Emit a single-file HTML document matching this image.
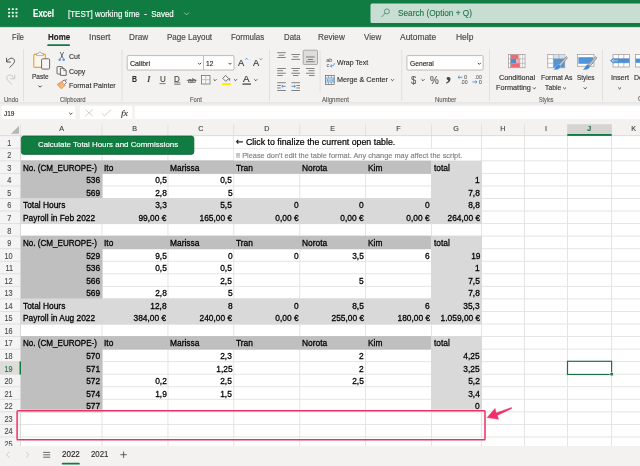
<!DOCTYPE html><html><head><meta charset="utf-8"><title>Excel</title><style>
html,body{margin:0;padding:0;overflow:hidden}
body{width:640px;height:466px;overflow:hidden;position:relative;background:#f3f2f1;font-family:"Liberation Sans", sans-serif}
.t{position:absolute;white-space:pre;line-height:14px;height:14px;margin:0;padding:0;-webkit-text-stroke:0.14px currentColor}
svg{position:absolute;left:0;top:0;will-change:transform}
.L{position:absolute;left:0;top:0;width:640px;height:466px;will-change:transform}
</style></head><body>
<svg width="640" height="466" viewBox="0 0 640 466">
<rect x="0" y="0" width="640" height="27" fill="#107c41"/>
<rect x="0" y="26.6" width="640" height="0.8" fill="#5a9d78" opacity="0.6"/>
<rect x="8.15" y="8.15" width="1.9" height="1.9" rx="0.4" fill="#fff"/>
<rect x="8.15" y="11.75" width="1.9" height="1.9" rx="0.4" fill="#fff"/>
<rect x="8.15" y="15.35" width="1.9" height="1.9" rx="0.4" fill="#fff"/>
<rect x="11.85" y="8.15" width="1.9" height="1.9" rx="0.4" fill="#fff"/>
<rect x="11.85" y="11.75" width="1.9" height="1.9" rx="0.4" fill="#fff"/>
<rect x="11.85" y="15.35" width="1.9" height="1.9" rx="0.4" fill="#fff"/>
<rect x="15.55" y="8.15" width="1.9" height="1.9" rx="0.4" fill="#fff"/>
<rect x="15.55" y="11.75" width="1.9" height="1.9" rx="0.4" fill="#fff"/>
<rect x="15.55" y="15.35" width="1.9" height="1.9" rx="0.4" fill="#fff"/>
<path d="M184.3,12.6 L186.6,14.9 L188.9,12.6" fill="none" stroke="#b7d8c6" stroke-width="0.8"/>
<rect x="370.5" y="3.5" width="280" height="19.6" rx="1.6" fill="#c9ded2"/>
<circle cx="386.9" cy="11.4" r="2.5" fill="none" stroke="#3a8560" stroke-width="0.8"/>
<path d="M385.1,13.3 L381.7,16.8" stroke="#3a8560" stroke-width="0.8" stroke-linecap="round"/>
<rect x="47.2" y="44.2" width="22.8" height="1.9" rx="0.9" fill="#107c41"/>
<rect x="0" y="102.4" width="640" height="0.9" fill="#dfdedc"/>
<rect x="0" y="103.3" width="640" height="0.9" fill="#e8e7e5"/>
<rect x="0" y="104.2" width="640" height="0.9" fill="#efeeec"/>
<rect x="1.6" y="105.9" width="73.8" height="13.1" rx="1.2" fill="#fff"/>
<rect x="79.8" y="105.9" width="52.4" height="13.1" rx="1.2" fill="#fff"/>
<rect x="135" y="105.9" width="520" height="13.1" rx="1.2" fill="#fff"/>
<path d="M69.2,112.8 L70.8,114.4 L72.4,112.8" fill="none" stroke="#3b3a39" stroke-width="0.95"/>
<path d="M85.5,109.7 L92.6,116 M92.6,109.7 L85.5,116" stroke="#c2c0be" stroke-width="0.75" fill="none"/>
<path d="M101.8,113.2 L104.6,115.9 L110.8,109.7" stroke="#c2c0be" stroke-width="0.75" fill="none"/>
<rect x="23.1" y="49.5" width="0.8" height="51.5" fill="#dddbd9"/>
<rect x="121.6" y="49.5" width="0.8" height="51.5" fill="#dddbd9"/>
<rect x="269.1" y="49.5" width="0.8" height="51.5" fill="#dddbd9"/>
<rect x="401.40000000000003" y="49.5" width="0.8" height="51.5" fill="#dddbd9"/>
<rect x="489.1" y="49.5" width="0.8" height="51.5" fill="#dddbd9"/>
<rect x="602.1" y="49.5" width="0.8" height="51.5" fill="#dddbd9"/>
<rect x="319.7" y="51" width="0.8" height="41.5" fill="#dddbd9"/>
<rect x="127.2" y="55.6" width="106.8" height="14.4" rx="1" fill="#fff" stroke="#a9a7a5" stroke-width="0.75"/>
<rect x="203" y="55.6" width="0.7" height="14.4" fill="#a9a7a5"/>
<rect x="406.9" y="55.6" width="76.2" height="14.4" rx="1" fill="#fff" stroke="#a9a7a5" stroke-width="0.75"/>
<rect x="303.2" y="50.2" width="14.3" height="14.3" rx="1" fill="#dedcda" stroke="#8f8d8b" stroke-width="0.7"/>
<rect x="0" y="135.8" width="640" height="310.2" fill="#fff"/>
<rect x="20.6" y="147.85" width="640" height="0.9" fill="#e2e2e2"/>
<rect x="20.6" y="160.40" width="640" height="0.9" fill="#e2e2e2"/>
<rect x="20.6" y="172.95" width="640" height="0.9" fill="#e2e2e2"/>
<rect x="20.6" y="185.50" width="640" height="0.9" fill="#e2e2e2"/>
<rect x="20.6" y="198.05" width="640" height="0.9" fill="#e2e2e2"/>
<rect x="20.6" y="210.60" width="640" height="0.9" fill="#e2e2e2"/>
<rect x="20.6" y="223.15" width="640" height="0.9" fill="#e2e2e2"/>
<rect x="20.6" y="235.70" width="640" height="0.9" fill="#e2e2e2"/>
<rect x="20.6" y="248.25" width="640" height="0.9" fill="#e2e2e2"/>
<rect x="20.6" y="260.80" width="640" height="0.9" fill="#e2e2e2"/>
<rect x="20.6" y="273.35" width="640" height="0.9" fill="#e2e2e2"/>
<rect x="20.6" y="285.90" width="640" height="0.9" fill="#e2e2e2"/>
<rect x="20.6" y="298.45" width="640" height="0.9" fill="#e2e2e2"/>
<rect x="20.6" y="311.00" width="640" height="0.9" fill="#e2e2e2"/>
<rect x="20.6" y="323.55" width="640" height="0.9" fill="#e2e2e2"/>
<rect x="20.6" y="336.10" width="640" height="0.9" fill="#e2e2e2"/>
<rect x="20.6" y="348.65" width="640" height="0.9" fill="#e2e2e2"/>
<rect x="20.6" y="361.20" width="640" height="0.9" fill="#e2e2e2"/>
<rect x="20.6" y="373.75" width="640" height="0.9" fill="#e2e2e2"/>
<rect x="20.6" y="386.30" width="640" height="0.9" fill="#e2e2e2"/>
<rect x="20.6" y="398.85" width="640" height="0.9" fill="#e2e2e2"/>
<rect x="20.6" y="411.40" width="640" height="0.9" fill="#e2e2e2"/>
<rect x="20.6" y="423.95" width="640" height="0.9" fill="#e2e2e2"/>
<rect x="20.6" y="436.50" width="640" height="0.9" fill="#e2e2e2"/>
<rect x="20.6" y="449.05" width="640" height="0.9" fill="#e2e2e2"/>
<rect x="101.50" y="135.8" width="0.9" height="320" fill="#e2e2e2"/>
<rect x="167.50" y="135.8" width="0.9" height="320" fill="#e2e2e2"/>
<rect x="233.30" y="135.8" width="0.9" height="320" fill="#e2e2e2"/>
<rect x="299.30" y="135.8" width="0.9" height="320" fill="#e2e2e2"/>
<rect x="365.10" y="135.8" width="0.9" height="320" fill="#e2e2e2"/>
<rect x="431.00" y="135.8" width="0.9" height="320" fill="#e2e2e2"/>
<rect x="481.00" y="135.8" width="0.9" height="320" fill="#e2e2e2"/>
<rect x="524.10" y="135.8" width="0.9" height="320" fill="#e2e2e2"/>
<rect x="567.00" y="135.8" width="0.9" height="320" fill="#e2e2e2"/>
<rect x="611.10" y="135.8" width="0.9" height="320" fill="#e2e2e2"/>
<rect x="654.50" y="135.8" width="0.9" height="320" fill="#e2e2e2"/>
<rect x="20.60" y="160.40" width="411.35" height="13.50" fill="#bfbfbf"/>
<rect x="431.00" y="160.40" width="50.95" height="38.60" fill="#d9d9d9"/>
<rect x="20.60" y="172.95" width="81.85" height="26.05" fill="#bfbfbf"/>
<rect x="20.60" y="198.05" width="461.35" height="26.05" fill="#d9d9d9"/>
<rect x="20.60" y="235.70" width="411.35" height="13.50" fill="#bfbfbf"/>
<rect x="431.00" y="235.70" width="50.95" height="63.70" fill="#d9d9d9"/>
<rect x="20.60" y="248.25" width="81.85" height="51.15" fill="#bfbfbf"/>
<rect x="20.60" y="298.45" width="461.35" height="26.05" fill="#d9d9d9"/>
<rect x="20.60" y="336.10" width="411.35" height="13.50" fill="#bfbfbf"/>
<rect x="431.00" y="336.10" width="50.95" height="76.25" fill="#d9d9d9"/>
<rect x="20.60" y="348.65" width="81.85" height="63.70" fill="#bfbfbf"/>
<rect x="234.4" y="136.30" width="196.50" height="11.55" fill="#fff"/>
<rect x="234.4" y="148.85" width="246.50" height="11.55" fill="#fff"/>
<rect x="0" y="135.8" width="20.6" height="310.2" fill="#f4f4f4"/>
<rect x="0" y="147.85" width="20.6" height="0.9" fill="#dedede"/>
<rect x="0" y="160.40" width="20.6" height="0.9" fill="#dedede"/>
<rect x="0" y="172.95" width="20.6" height="0.9" fill="#dedede"/>
<rect x="0" y="185.50" width="20.6" height="0.9" fill="#dedede"/>
<rect x="0" y="198.05" width="20.6" height="0.9" fill="#dedede"/>
<rect x="0" y="210.60" width="20.6" height="0.9" fill="#dedede"/>
<rect x="0" y="223.15" width="20.6" height="0.9" fill="#dedede"/>
<rect x="0" y="235.70" width="20.6" height="0.9" fill="#dedede"/>
<rect x="0" y="248.25" width="20.6" height="0.9" fill="#dedede"/>
<rect x="0" y="260.80" width="20.6" height="0.9" fill="#dedede"/>
<rect x="0" y="273.35" width="20.6" height="0.9" fill="#dedede"/>
<rect x="0" y="285.90" width="20.6" height="0.9" fill="#dedede"/>
<rect x="0" y="298.45" width="20.6" height="0.9" fill="#dedede"/>
<rect x="0" y="311.00" width="20.6" height="0.9" fill="#dedede"/>
<rect x="0" y="323.55" width="20.6" height="0.9" fill="#dedede"/>
<rect x="0" y="336.10" width="20.6" height="0.9" fill="#dedede"/>
<rect x="0" y="348.65" width="20.6" height="0.9" fill="#dedede"/>
<rect x="0" y="361.20" width="20.6" height="0.9" fill="#dedede"/>
<rect x="0" y="373.75" width="20.6" height="0.9" fill="#dedede"/>
<rect x="0" y="386.30" width="20.6" height="0.9" fill="#dedede"/>
<rect x="0" y="398.85" width="20.6" height="0.9" fill="#dedede"/>
<rect x="0" y="411.40" width="20.6" height="0.9" fill="#dedede"/>
<rect x="0" y="423.95" width="20.6" height="0.9" fill="#dedede"/>
<rect x="0" y="436.50" width="20.6" height="0.9" fill="#dedede"/>
<rect x="0" y="449.05" width="20.6" height="0.9" fill="#dedede"/>
<rect x="20.1" y="135.8" width="0.8" height="320" fill="#d4d4d4"/>
<rect x="0" y="361.70" width="20.6" height="12.55" fill="#dfdddb"/>
<rect x="19.50" y="361.40" width="1.5" height="13.15" fill="#107c41"/>
<rect x="0" y="119" width="640" height="16.80000000000001" fill="#f3f2f1"/>
<rect x="20.10" y="124.4" width="0.9" height="11.400000000000006" fill="#e0e0e0"/>
<rect x="101.50" y="124.4" width="0.9" height="11.400000000000006" fill="#e0e0e0"/>
<rect x="167.50" y="124.4" width="0.9" height="11.400000000000006" fill="#e0e0e0"/>
<rect x="233.30" y="124.4" width="0.9" height="11.400000000000006" fill="#e0e0e0"/>
<rect x="299.30" y="124.4" width="0.9" height="11.400000000000006" fill="#e0e0e0"/>
<rect x="365.10" y="124.4" width="0.9" height="11.400000000000006" fill="#e0e0e0"/>
<rect x="431.00" y="124.4" width="0.9" height="11.400000000000006" fill="#e0e0e0"/>
<rect x="481.00" y="124.4" width="0.9" height="11.400000000000006" fill="#e0e0e0"/>
<rect x="524.10" y="124.4" width="0.9" height="11.400000000000006" fill="#e0e0e0"/>
<rect x="567.00" y="124.4" width="0.9" height="11.400000000000006" fill="#e0e0e0"/>
<rect x="611.10" y="124.4" width="0.9" height="11.400000000000006" fill="#e0e0e0"/>
<rect x="654.50" y="124.4" width="0.9" height="11.400000000000006" fill="#e0e0e0"/>
<rect x="0" y="135.20000000000002" width="640" height="0.9" fill="#d9d9d9"/>
<rect x="567.30" y="124.2" width="44.40" height="10" fill="#d6d4d2"/>
<rect x="567.30" y="134" width="44.40" height="1.9" fill="#107c41"/>
<path d="M19,125.8 L19,133.8 L11,133.8 Z" fill="#b5b5b5"/>
<rect x="21.3" y="136" width="172.6" height="18.4" rx="2.6" fill="#107c41" stroke="#0c5e31" stroke-width="0.7"/>
<rect x="567.50" y="361.30" width="44.10" height="13.15" fill="#fff" stroke="#1e7145" stroke-width="1.2"/>
<rect x="610.00" y="372.65" width="3.2" height="3.2" fill="#1e7145" stroke="#fff" stroke-width="0.6"/>
<path d="M6.6,57.8 L6.6,62 L10.8,62 M6.9,61.7 C8.6,58.6 11.6,57.2 13.6,58.9 C15.6,60.7 14.6,63.2 9.5,67.5" fill="none" stroke="#484644" stroke-width="0.9"/>
<path d="M14.7,74.6 L14.7,78.8 L10.5,78.8 M14.4,78.5 C12.7,75.4 9.7,74 7.7,75.7 C5.7,77.5 6.7,80 11.8,84.3" fill="none" stroke="#c4c2c0" stroke-width="0.9"/>
<rect x="33.8" y="54.4" width="11.6" height="13" rx="0.8" fill="#faf6ee" stroke="#eba13a" stroke-width="1.1"/>
<path d="M36.6,55.6 L36.6,53.4 L38.6,53.4 L40,51.5 L41.4,53.4 L43.4,53.4 L43.4,55.6 Z" fill="#f6f6f6" stroke="#9a9896" stroke-width="0.7"/>
<rect x="41.6" y="58.8" width="8" height="10.3" rx="1" fill="#f6f5f4" stroke="#5d5b59" stroke-width="0.9"/>
<path d="M38.50,85.60 L40.10,87.20 L41.70,85.60" fill="none" stroke="#3b3a39" stroke-width="0.95"/>
<path d="M60.2,52 L63.3,58.7 M63.6,52 L60.5,58.7" stroke="#484644" stroke-width="0.75" fill="none"/>
<circle cx="59.7" cy="59.7" r="1.25" fill="#4a9be0"/><circle cx="63.7" cy="59.7" r="1.25" fill="#4a9be0"/>
<rect x="57" y="66.6" width="5.4" height="7.4" rx="0.6" fill="#f6f5f4" stroke="#484644" stroke-width="0.8"/>
<path d="M60.4,68.2 L64,68.2 L66.2,70.4 L66.2,75.4 L60.4,75.4 Z" fill="#f6f5f4" stroke="#484644" stroke-width="0.8"/>
<path d="M63.8,68.4 L63.8,70.6 L66,70.6" fill="none" stroke="#484644" stroke-width="0.6"/>
<path d="M57.2,84.4 L62.2,81.2 L65.2,85.4 L61.2,88.8 Z" fill="#f2a964" stroke="#e27a26" stroke-width="0.6" stroke-linejoin="round"/>
<path d="M59.6,85.6 L62.6,83.6 M60.8,87.2 L63.8,85" stroke="#fbe3cc" stroke-width="0.6"/>
<path d="M62.2,81.4 L64.4,79.9 L66.4,82.6 L64.6,84.4" fill="#f6f5f4" stroke="#484644" stroke-width="0.7" stroke-linejoin="round"/>
<path d="M65.2,80.4 L66.6,79.6" stroke="#484644" stroke-width="0.9"/>
<path d="M198.10,62.85 L199.60,64.35 L201.10,62.85" fill="none" stroke="#3b3a39" stroke-width="0.95"/>
<path d="M228.50,62.85 L230.00,64.35 L231.50,62.85" fill="none" stroke="#3b3a39" stroke-width="0.95"/>
<path d="M477.80,62.85 L479.30,64.35 L480.80,62.85" fill="none" stroke="#3b3a39" stroke-width="0.95"/>
<path d="M245.2,59.6 L246.5,58.2 L247.8,59.6" fill="none" stroke="#2b88d8" stroke-width="0.8"/>
<path d="M259.6,58.4 L260.9,59.8 L262.2,58.4" fill="none" stroke="#2b88d8" stroke-width="0.8"/>
<rect x="186.6" y="79.9" width="10" height="0.65" fill="#484644"/>
<rect x="159.4" y="83.4" width="6.2" height="0.65" fill="#484644"/>
<rect x="174.2" y="82.6" width="6.2" height="0.6" fill="#484644"/><rect x="174.2" y="83.9" width="6.2" height="0.6" fill="#484644"/>
<rect x="201.4" y="75.4" width="8.6" height="8.6" fill="#f8f7f6" stroke="#605e5c" stroke-width="0.7"/>
<path d="M205.7,75.4 L205.7,84 M201.4,79.7 L210,79.7" stroke="#a19f9d" stroke-width="0.6"/>
<path d="M213.60,79.30 L215.00,80.70 L216.40,79.30" fill="none" stroke="#3b3a39" stroke-width="0.95"/>
<path d="M225.6,75.4 L228.6,78.5 L225.8,81.4 L222.8,78.4 Z" fill="#f8f7f6" stroke="#484644" stroke-width="0.75" stroke-linejoin="round"/>
<path d="M229.4,77.8 C230.5,79.2 230.7,80.6 229.5,80.8 C228.3,80.6 228.5,79.2 229.4,77.8 Z" fill="#2b88d8"/>
<rect x="222" y="83" width="8.8" height="2" fill="#ffee00"/>
<path d="M234.10,79.30 L235.50,80.70 L236.90,79.30" fill="none" stroke="#3b3a39" stroke-width="0.95"/>
<rect x="242.4" y="83.2" width="8.6" height="1.8" fill="#777573"/>
<path d="M254.40,79.30 L255.80,80.70 L257.20,79.30" fill="none" stroke="#3b3a39" stroke-width="0.95"/>
<rect x="277.20" y="52.40" width="8.60" height="0.75" fill="#605e5c"/><rect x="278.70" y="54.80" width="5.60" height="0.75" fill="#605e5c"/><rect x="277.20" y="57.20" width="8.60" height="0.75" fill="#605e5c"/>
<rect x="291.40" y="54.10" width="8.60" height="0.75" fill="#605e5c"/><rect x="292.90" y="56.50" width="5.60" height="0.75" fill="#605e5c"/><rect x="291.40" y="58.90" width="8.60" height="0.75" fill="#605e5c"/>
<rect x="306.00" y="56.60" width="8.60" height="0.75" fill="#605e5c"/><rect x="307.70" y="59.00" width="5.20" height="0.75" fill="#605e5c"/><rect x="306.00" y="61.40" width="8.60" height="0.75" fill="#605e5c"/>
<rect x="277.20" y="68.00" width="8.60" height="0.75" fill="#605e5c"/><rect x="277.20" y="70.40" width="5.80" height="0.75" fill="#605e5c"/><rect x="277.20" y="72.80" width="8.60" height="0.75" fill="#605e5c"/><rect x="277.20" y="75.20" width="5.60" height="0.75" fill="#605e5c"/>
<rect x="291.40" y="68.00" width="8.60" height="0.75" fill="#605e5c"/><rect x="293.00" y="70.40" width="5.40" height="0.75" fill="#605e5c"/><rect x="291.40" y="72.80" width="8.60" height="0.75" fill="#605e5c"/><rect x="293.00" y="75.20" width="5.40" height="0.75" fill="#605e5c"/>
<rect x="306.00" y="68.00" width="8.60" height="0.75" fill="#605e5c"/><rect x="308.40" y="70.40" width="6.20" height="0.75" fill="#605e5c"/><rect x="306.00" y="72.80" width="8.60" height="0.75" fill="#605e5c"/><rect x="309.00" y="75.20" width="5.60" height="0.75" fill="#605e5c"/>
<rect x="277.20" y="82.40" width="8.60" height="0.75" fill="#605e5c"/><rect x="277.20" y="85.00" width="3.60" height="0.75" fill="#605e5c"/><rect x="277.20" y="87.60" width="3.60" height="0.75" fill="#605e5c"/><rect x="277.20" y="90.20" width="8.60" height="0.75" fill="#605e5c"/>
<path d="M285.8,86.3 L281.8,86.3 M283.2,85 L281.8,86.3 L283.2,87.6" fill="none" stroke="#2b88d8" stroke-width="0.8"/>
<rect x="291.40" y="82.40" width="8.60" height="0.75" fill="#605e5c"/><rect x="296.40" y="85.00" width="3.60" height="0.75" fill="#605e5c"/><rect x="296.40" y="87.60" width="3.60" height="0.75" fill="#605e5c"/><rect x="291.40" y="90.20" width="8.60" height="0.75" fill="#605e5c"/>
<path d="M291.4,86.3 L295.4,86.3 M294,85 L295.4,86.3 L294,87.6" fill="none" stroke="#2b88d8" stroke-width="0.8"/>
<text x="326.2" y="62.4" font-family="Liberation Sans, sans-serif" font-size="5.6" fill="#484644">ab</text>
<text x="326.4" y="67.4" font-family="Liberation Sans, sans-serif" font-size="5.6" fill="#484644">c</text>
<path d="M334.3,63.2 C334.5,65.2 333.4,66 330.6,66 M332,64.6 L330.4,66 L332,67.4" fill="none" stroke="#2b88d8" stroke-width="0.8"/>
<rect x="325.4" y="75.6" width="8.8" height="8.8" fill="#f6f5f4" stroke="#5a5856" stroke-width="0.65"/>
<rect x="325.7" y="78" width="8.2" height="4" fill="#cfe4f7" stroke="#2b88d8" stroke-width="0.55"/>
<path d="M327,80.1 L332.8,80.1 M328,79.2 L327,80.1 L328,81 M331.8,79.2 L332.8,80.1 L331.8,81" fill="none" stroke="#2b88d8" stroke-width="0.55"/>
<path d="M328.4,75.6 L328.4,78 M331.3,75.6 L331.3,78 M328.4,82 L328.4,84.4 M331.3,82 L331.3,84.4" stroke="#5a5856" stroke-width="0.5"/>
<path d="M391.10,79.30 L392.50,80.70 L393.90,79.30" fill="none" stroke="#3b3a39" stroke-width="0.95"/>
<path d="M421.60,79.30 L423.00,80.70 L424.40,79.30" fill="none" stroke="#3b3a39" stroke-width="0.95"/>
<text x="464.1" y="79.1" font-family="Liberation Sans, sans-serif" font-size="5.3" fill="#484644" textLength="3.2" lengthAdjust="spacingAndGlyphs">0</text>
<text x="460.4" y="84.1" font-family="Liberation Sans, sans-serif" font-size="5.3" fill="#484644" textLength="7.2" lengthAdjust="spacingAndGlyphs">.00</text>
<path d="M462.4,77.3 L458,77.3 M459.5,75.9 L458,77.3 L459.5,78.7" fill="none" stroke="#2b88d8" stroke-width="0.8"/>
<text x="474.6" y="79.1" font-family="Liberation Sans, sans-serif" font-size="5.3" fill="#484644" textLength="7.2" lengthAdjust="spacingAndGlyphs">.00</text>
<text x="478.7" y="84.1" font-family="Liberation Sans, sans-serif" font-size="5.3" fill="#484644" textLength="3.2" lengthAdjust="spacingAndGlyphs">0</text>
<path d="M472.4,81.9 L477,81.9 M475.5,80.5 L477,81.9 L475.5,83.3" fill="none" stroke="#2b88d8" stroke-width="0.8"/>
<rect x="508.4" y="54.4" width="16.6" height="13.4" fill="#fdfdfd" stroke="#8a8886" stroke-width="0.6"/>
<rect x="510.6" y="54.7" width="8" height="4.2" fill="#ee6a72"/>
<rect x="510.6" y="59" width="5.6" height="4.3" fill="#4a90d9"/>
<rect x="516.2" y="59" width="3.6" height="4.3" fill="#f5aab0"/>
<rect x="510.6" y="63.4" width="9.2" height="4.1" fill="#ee6a72"/>
<path d="M510.5,54.4 L510.5,67.8 M519.9,54.4 L519.9,67.8 M522.6,54.4 L522.6,67.8 M508.4,58.9 L525,58.9 M508.4,63.3 L525,63.3" stroke="#8a8886" stroke-width="0.45" fill="none"/>
<path d="M533.00,87.50 L534.40,88.90 L535.80,87.50" fill="none" stroke="#3b3a39" stroke-width="0.95"/>
<rect x="547.8" y="54.4" width="17" height="13.4" fill="#fdfdfd" stroke="#8a8886" stroke-width="0.6"/>
<rect x="553.4" y="58.6" width="11.2" height="9" fill="#4f95dc"/>
<rect x="553.4" y="54.7" width="11.2" height="3.9" fill="#cfe2f6"/>
<path d="M553.4,54.4 L553.4,67.8 M559,54.4 L559,67.8 M547.8,58.6 L564.8,58.6 M547.8,63.2 L564.8,63.2" stroke="#8a8886" stroke-width="0.45" fill="none"/>
<path d="M566.2,56.6 L567.6,57.8 L560.8,66.2 L558.8,64.6 Z" fill="#c2c0be" stroke="#6a6866" stroke-width="0.45"/>
<path d="M558.6,64.2 L561,66.2 C560,69 556.6,70.4 553.2,69.6 C555.6,68.4 555.6,65.2 558.6,64.2 Z" fill="#3d8ad6" stroke="#f3f2f1" stroke-width="0.3"/>
<path d="M563.20,87.50 L564.60,88.90 L566.00,87.50" fill="none" stroke="#3b3a39" stroke-width="0.95"/>
<rect x="577.6" y="54.4" width="16.4" height="11.8" fill="#fdfdfd" stroke="#8a8886" stroke-width="0.6"/>
<rect x="578.4" y="57.2" width="14.8" height="6.6" fill="#4f95dc"/>
<path d="M595.6,56.6 L597,57.8 L590.2,66.2 L588.2,64.6 Z" fill="#c2c0be" stroke="#6a6866" stroke-width="0.45"/>
<path d="M588,64.2 L590.4,66.2 C589.4,69 586,70.4 582.6,69.6 C585,68.4 585,65.2 588,64.2 Z" fill="#3d8ad6" stroke="#f3f2f1" stroke-width="0.3"/>
<path d="M583.80,87.50 L585.20,88.90 L586.60,87.50" fill="none" stroke="#3b3a39" stroke-width="0.95"/>
<rect x="613" y="54.4" width="16.4" height="12.6" fill="#fdfdfd" stroke="#8a8886" stroke-width="0.6"/>
<path d="M618.4,54.4 L618.4,67 M623.8,54.4 L623.8,67 M613,58.6 L629.4,58.6 M613,62.8 L629.4,62.8" stroke="#8a8886" stroke-width="0.5" fill="none"/>
<rect x="613.2" y="58.6" width="16.2" height="4.2" fill="#4a90d9"/>
<path d="M610,60.7 L613.6,57.6 L613.6,63.8 Z" fill="#4a90d9"/>
<path d="M612,60.7 L618,60.7 M613.8,59.2 L612,60.7 L613.8,62.2" stroke="#dbeafa" stroke-width="0.6" fill="none"/>
<path d="M618.20,87.50 L619.60,88.90 L621.00,87.50" fill="none" stroke="#3b3a39" stroke-width="0.95"/>
<rect x="635.4" y="54.4" width="16.4" height="12.6" fill="#fdfdfd" stroke="#8a8886" stroke-width="0.6"/>
<rect x="635.6" y="58.6" width="8" height="4.2" fill="#4a90d9"/>
</svg>
<div class="L">
<span class="t" id="t0" style="font-size:10.2px;color:#fff;top:6.60px;font-weight:700;left:32.80px;transform-origin:0 50%;transform:scaleX(0.792);">Excel</span>
<span class="t" id="t1" style="font-size:8.3px;color:#fff;top:6.50px;left:67.80px;transform-origin:0 50%;transform:scaleX(0.960);">[TEST] working time  -  Saved</span>
<span class="t" id="t2" style="font-size:8.3px;color:#24774b;top:6.30px;left:397.60px;transform-origin:0 50%;transform:scaleX(0.993);">Search (Option + Q)</span>
<span class="t" id="t3" style="font-size:8.4px;color:#484644;top:30.30px;left:12.20px;transform-origin:0 50%;transform:scaleX(0.889);">File</span>
<span class="t" id="t4" style="font-size:8.4px;color:#252423;top:30.30px;font-weight:700;left:47.50px;transform-origin:0 50%;transform:scaleX(0.958);">Home</span>
<span class="t" id="t5" style="font-size:8.4px;color:#484644;top:30.30px;left:88.50px;transform-origin:0 50%;transform:scaleX(1.026);">Insert</span>
<span class="t" id="t6" style="font-size:8.4px;color:#484644;top:30.30px;left:128.50px;transform-origin:0 50%;transform:scaleX(0.977);">Draw</span>
<span class="t" id="t7" style="font-size:8.4px;color:#484644;top:30.30px;left:166.50px;transform-origin:0 50%;transform:scaleX(0.959);">Page Layout</span>
<span class="t" id="t8" style="font-size:8.4px;color:#484644;top:30.30px;left:231.00px;transform-origin:0 50%;transform:scaleX(0.951);">Formulas</span>
<span class="t" id="t9" style="font-size:8.4px;color:#484644;top:30.30px;left:283.50px;transform-origin:0 50%;transform:scaleX(0.932);">Data</span>
<span class="t" id="t10" style="font-size:8.4px;color:#484644;top:30.30px;left:318.40px;transform-origin:0 50%;transform:scaleX(0.976);">Review</span>
<span class="t" id="t11" style="font-size:8.4px;color:#484644;top:30.30px;left:364.00px;transform-origin:0 50%;transform:scaleX(0.955);">View</span>
<span class="t" id="t12" style="font-size:8.4px;color:#484644;top:30.30px;left:400.40px;transform-origin:0 50%;transform:scaleX(1.009);">Automate</span>
<span class="t" id="t13" style="font-size:8.4px;color:#484644;top:30.30px;left:455.60px;transform-origin:0 50%;transform:scaleX(1.010);">Help</span>
<span class="t" id="t14" style="font-size:6.9px;color:#605e5c;top:92.50px;left:3.90px;transform-origin:0 50%;transform:scaleX(0.867);">Undo</span>
<span class="t" id="t15" style="font-size:6.9px;color:#605e5c;top:92.50px;left:59.70px;transform-origin:0 50%;transform:scaleX(0.864);">Clipboard</span>
<span class="t" id="t16" style="font-size:6.9px;color:#605e5c;top:92.50px;left:189.50px;transform-origin:0 50%;transform:scaleX(0.855);">Font</span>
<span class="t" id="t17" style="font-size:6.9px;color:#605e5c;top:92.50px;left:321.80px;transform-origin:0 50%;transform:scaleX(0.881);">Alignment</span>
<span class="t" id="t18" style="font-size:6.9px;color:#605e5c;top:92.50px;left:435.00px;transform-origin:0 50%;transform:scaleX(0.869);">Number</span>
<span class="t" id="t19" style="font-size:6.9px;color:#605e5c;top:92.50px;left:539.30px;transform-origin:0 50%;transform:scaleX(0.773);">Styles</span>
<span class="t" id="t20" style="font-size:6.9px;color:#605e5c;top:92.00px;left:637.60px;transform-origin:0 50%;transform:scaleX(0.883);">C</span>
<span class="t" id="t21" style="font-size:7.6px;color:#323130;top:70.40px;left:32.10px;transform-origin:0 50%;transform:scaleX(0.855);">Paste</span>
<span class="t" id="t22" style="font-size:7.6px;color:#323130;top:50.20px;left:68.80px;transform-origin:0 50%;transform:scaleX(0.922);">Cut</span>
<span class="t" id="t23" style="font-size:7.6px;color:#323130;top:64.90px;left:68.80px;transform-origin:0 50%;transform:scaleX(0.919);">Copy</span>
<span class="t" id="t24" style="font-size:7.6px;color:#323130;top:78.60px;left:68.80px;transform-origin:0 50%;transform:scaleX(0.930);">Format Painter</span>
<span class="t" id="t25" style="font-size:7.6px;color:#252423;top:57.00px;left:130.00px;transform-origin:0 50%;transform:scaleX(0.929);">Calibri</span>
<span class="t" id="t26" style="font-size:7.6px;color:#252423;top:57.00px;left:206.20px;transform-origin:0 50%;transform:scaleX(0.875);">12</span>
<span class="t" id="t27" style="font-size:8.6px;color:#323130;top:72.40px;font-weight:700;left:131.80px;transform-origin:0 50%;transform:scaleX(0.804);">B</span>
<span class="t" id="t28" style="font-size:8.6px;color:#323130;top:72.40px;font-style:italic;font-family:'Liberation Serif', serif;left:147.20px;transform-origin:0 50%;transform:scaleX(1.183);">I</span>
<span class="t" id="t29" style="font-size:8.2px;color:#484644;top:72.90px;left:159.60px;transform-origin:0 50%;transform:scaleX(0.979);">U</span>
<span class="t" id="t30" style="font-size:8.2px;color:#484644;top:72.90px;left:174.40px;transform-origin:0 50%;transform:scaleX(0.979);">D</span>
<span class="t" id="t31" style="font-size:7.6px;color:#484644;top:74.00px;left:187.60px;transform-origin:0 50%;transform:scaleX(0.923);">ab</span>
<span class="t" id="t32" style="font-size:9.8px;color:#323130;top:56.00px;left:238.40px;transform-origin:0 50%;transform:scaleX(0.947);">A</span>
<span class="t" id="t33" style="font-size:9.0px;color:#323130;top:56.20px;left:253.20px;transform-origin:0 50%;transform:scaleX(1.031);">A</span>
<span class="t" id="t34" style="font-size:9.0px;color:#323130;top:71.60px;left:243.40px;transform-origin:0 50%;transform:scaleX(1.097);">A</span>
<span class="t" id="t35" style="font-size:7.6px;color:#323130;top:56.20px;left:337.00px;transform-origin:0 50%;transform:scaleX(0.920);">Wrap Text</span>
<span class="t" id="t36" style="font-size:7.6px;color:#323130;top:73.20px;left:337.00px;transform-origin:0 50%;transform:scaleX(0.951);">Merge &amp; Center</span>
<span class="t" id="t37" style="font-size:7.6px;color:#252423;top:57.00px;left:410.00px;transform-origin:0 50%;transform:scaleX(0.880);">General</span>
<span class="t" id="t38" style="font-size:10.6px;color:#5a5856;top:72.60px;left:411.20px;transform-origin:0 50%;transform:scaleX(0.880);">$</span>
<span class="t" id="t39" style="font-size:10.6px;color:#5a5856;top:72.60px;left:430.00px;transform-origin:0 50%;transform:scaleX(0.934);">%</span>
<span class="t" id="t40" style="font-size:20px;color:#484644;top:65.90px;font-weight:700;font-family:'Liberation Serif', serif;left:446.40px;transform-origin:0 50%;transform:scaleX(1.040);">,</span>
<span class="t" id="t41" style="font-size:7.6px;color:#323130;top:71.20px;left:498.80px;transform-origin:0 50%;transform:scaleX(0.953);">Conditional</span>
<span class="t" id="t42" style="font-size:7.6px;color:#323130;top:80.70px;left:496.30px;transform-origin:0 50%;transform:scaleX(0.962);">Formatting</span>
<span class="t" id="t43" style="font-size:7.6px;color:#323130;top:71.20px;left:540.80px;transform-origin:0 50%;transform:scaleX(0.913);">Format As</span>
<span class="t" id="t44" style="font-size:7.6px;color:#323130;top:80.70px;left:545.00px;transform-origin:0 50%;transform:scaleX(0.892);">Table</span>
<span class="t" id="t45" style="font-size:7.6px;color:#323130;top:71.20px;left:577.00px;transform-origin:0 50%;transform:scaleX(0.851);">Styles</span>
<span class="t" id="t46" style="font-size:7.6px;color:#323130;top:71.20px;left:610.80px;transform-origin:0 50%;transform:scaleX(0.947);">Insert</span>
<span class="t" id="t47" style="font-size:7.6px;color:#323130;top:71.20px;left:633.80px;transform-origin:0 50%;transform:scaleX(0.920);">Delete</span>
<span class="t" id="t48" style="font-size:7.6px;color:#252423;top:107.00px;left:3.80px;transform-origin:0 50%;transform:scaleX(0.857);">J19</span>
<span class="t" id="t49" style="font-size:8.8px;color:#3b3a39;top:106.20px;font-style:italic;font-family:'Liberation Serif', serif;letter-spacing:-0.3px;left:120.60px;transform-origin:0 50%;transform:scaleX(1.148);">fx</span>
<span class="t" id="t50" style="font-size:7.8px;color:#444;top:122.00px;left:58.70px;transform-origin:50% 50%;transform:scaleX(0.920);">A</span>
<span class="t" id="t51" style="font-size:7.8px;color:#444;top:122.00px;left:132.40px;transform-origin:50% 50%;transform:scaleX(0.920);">B</span>
<span class="t" id="t52" style="font-size:7.8px;color:#444;top:122.00px;left:198.08px;transform-origin:50% 50%;transform:scaleX(0.920);">C</span>
<span class="t" id="t53" style="font-size:7.8px;color:#444;top:122.00px;left:263.98px;transform-origin:50% 50%;transform:scaleX(0.920);">D</span>
<span class="t" id="t54" style="font-size:7.8px;color:#444;top:122.00px;left:330.10px;transform-origin:50% 50%;transform:scaleX(0.920);">E</span>
<span class="t" id="t55" style="font-size:7.8px;color:#444;top:122.00px;left:396.17px;transform-origin:50% 50%;transform:scaleX(0.920);">F</span>
<span class="t" id="t56" style="font-size:7.8px;color:#444;top:122.00px;left:453.46px;transform-origin:50% 50%;transform:scaleX(0.920);">G</span>
<span class="t" id="t57" style="font-size:7.8px;color:#444;top:122.00px;left:500.23px;transform-origin:50% 50%;transform:scaleX(0.920);">H</span>
<span class="t" id="t58" style="font-size:7.8px;color:#444;top:122.00px;left:544.96px;transform-origin:50% 50%;transform:scaleX(0.920);">I</span>
<span class="t" id="t59" style="font-size:7.8px;color:#1e7145;top:122.00px;font-weight:700;left:587.38px;transform-origin:50% 50%;transform:scaleX(0.920);">J</span>
<span class="t" id="t60" style="font-size:7.8px;color:#444;top:122.00px;left:630.70px;transform-origin:50% 50%;transform:scaleX(0.920);">K</span>
<span class="t" id="t61" style="font-size:8.3px;color:#4d4d4d;top:135.68px;left:6.59px;transform-origin:50% 50%;transform:scaleX(0.880);">1</span>
<span class="t" id="t62" style="font-size:8.3px;color:#4d4d4d;top:148.23px;left:6.59px;transform-origin:50% 50%;transform:scaleX(0.880);">2</span>
<span class="t" id="t63" style="font-size:8.3px;color:#4d4d4d;top:160.78px;left:6.59px;transform-origin:50% 50%;transform:scaleX(0.880);">3</span>
<span class="t" id="t64" style="font-size:8.3px;color:#4d4d4d;top:173.33px;left:6.59px;transform-origin:50% 50%;transform:scaleX(0.880);">4</span>
<span class="t" id="t65" style="font-size:8.3px;color:#4d4d4d;top:185.88px;left:6.59px;transform-origin:50% 50%;transform:scaleX(0.880);">5</span>
<span class="t" id="t66" style="font-size:8.3px;color:#4d4d4d;top:198.43px;left:6.59px;transform-origin:50% 50%;transform:scaleX(0.880);">6</span>
<span class="t" id="t67" style="font-size:8.3px;color:#4d4d4d;top:210.98px;left:6.59px;transform-origin:50% 50%;transform:scaleX(0.880);">7</span>
<span class="t" id="t68" style="font-size:8.3px;color:#4d4d4d;top:223.53px;left:6.59px;transform-origin:50% 50%;transform:scaleX(0.880);">8</span>
<span class="t" id="t69" style="font-size:8.3px;color:#4d4d4d;top:236.08px;left:6.59px;transform-origin:50% 50%;transform:scaleX(0.880);">9</span>
<span class="t" id="t70" style="font-size:8.3px;color:#4d4d4d;top:248.62px;left:4.28px;transform-origin:50% 50%;transform:scaleX(0.880);">10</span>
<span class="t" id="t71" style="font-size:8.3px;color:#4d4d4d;top:261.18px;left:4.59px;transform-origin:50% 50%;transform:scaleX(0.880);">11</span>
<span class="t" id="t72" style="font-size:8.3px;color:#4d4d4d;top:273.73px;left:4.28px;transform-origin:50% 50%;transform:scaleX(0.880);">12</span>
<span class="t" id="t73" style="font-size:8.3px;color:#4d4d4d;top:286.28px;left:4.28px;transform-origin:50% 50%;transform:scaleX(0.880);">13</span>
<span class="t" id="t74" style="font-size:8.3px;color:#4d4d4d;top:298.83px;left:4.28px;transform-origin:50% 50%;transform:scaleX(0.880);">14</span>
<span class="t" id="t75" style="font-size:8.3px;color:#4d4d4d;top:311.38px;left:4.28px;transform-origin:50% 50%;transform:scaleX(0.880);">15</span>
<span class="t" id="t76" style="font-size:8.3px;color:#4d4d4d;top:323.93px;left:4.28px;transform-origin:50% 50%;transform:scaleX(0.880);">16</span>
<span class="t" id="t77" style="font-size:8.3px;color:#4d4d4d;top:336.48px;left:4.28px;transform-origin:50% 50%;transform:scaleX(0.880);">17</span>
<span class="t" id="t78" style="font-size:8.3px;color:#4d4d4d;top:349.03px;left:4.28px;transform-origin:50% 50%;transform:scaleX(0.880);">18</span>
<span class="t" id="t79" style="font-size:8.3px;color:#1e7145;top:361.58px;left:4.28px;transform-origin:50% 50%;transform:scaleX(0.880);">19</span>
<span class="t" id="t80" style="font-size:8.3px;color:#4d4d4d;top:374.12px;left:4.28px;transform-origin:50% 50%;transform:scaleX(0.880);">20</span>
<span class="t" id="t81" style="font-size:8.3px;color:#4d4d4d;top:386.68px;left:4.28px;transform-origin:50% 50%;transform:scaleX(0.880);">21</span>
<span class="t" id="t82" style="font-size:8.3px;color:#4d4d4d;top:399.23px;left:4.28px;transform-origin:50% 50%;transform:scaleX(0.880);">22</span>
<span class="t" id="t83" style="font-size:8.3px;color:#4d4d4d;top:411.78px;left:4.28px;transform-origin:50% 50%;transform:scaleX(0.880);">23</span>
<span class="t" id="t84" style="font-size:8.3px;color:#4d4d4d;top:424.33px;left:4.28px;transform-origin:50% 50%;transform:scaleX(0.880);">24</span>
<span class="t" id="t85" style="font-size:8.3px;color:#4d4d4d;top:436.88px;left:4.28px;transform-origin:50% 50%;transform:scaleX(0.880);">25</span>
<span class="t" id="t88" style="font-size:8.5px;color:#000;top:160.73px;-webkit-text-stroke:0.28px #000;left:22.70px;transform-origin:0 50%;transform:scaleX(0.949);">No. (CM_EUROPE-)</span>
<span class="t" id="t89" style="font-size:8.5px;color:#000;top:160.73px;-webkit-text-stroke:0.28px #000;left:104.10px;transform-origin:0 50%;transform:scaleX(0.985);">Ito</span>
<span class="t" id="t90" style="font-size:8.5px;color:#000;top:160.73px;-webkit-text-stroke:0.28px #000;left:170.10px;transform-origin:0 50%;transform:scaleX(0.985);">Marissa</span>
<span class="t" id="t91" style="font-size:8.5px;color:#000;top:160.73px;-webkit-text-stroke:0.28px #000;left:235.90px;transform-origin:0 50%;transform:scaleX(0.985);">Tran</span>
<span class="t" id="t92" style="font-size:8.5px;color:#000;top:160.73px;-webkit-text-stroke:0.28px #000;left:301.90px;transform-origin:0 50%;transform:scaleX(0.985);">Norota</span>
<span class="t" id="t93" style="font-size:8.5px;color:#000;top:160.73px;-webkit-text-stroke:0.28px #000;left:367.70px;transform-origin:0 50%;transform:scaleX(0.985);">Kim</span>
<span class="t" id="t94" style="font-size:8.5px;color:#000;top:160.73px;-webkit-text-stroke:0.28px #000;left:433.60px;transform-origin:0 50%;transform:scaleX(0.985);">total</span>
<span class="t" id="t95" style="font-size:8.5px;color:#000;top:236.03px;-webkit-text-stroke:0.28px #000;left:22.70px;transform-origin:0 50%;transform:scaleX(0.949);">No. (CM_EUROPE-)</span>
<span class="t" id="t96" style="font-size:8.5px;color:#000;top:236.03px;-webkit-text-stroke:0.28px #000;left:104.10px;transform-origin:0 50%;transform:scaleX(0.985);">Ito</span>
<span class="t" id="t97" style="font-size:8.5px;color:#000;top:236.03px;-webkit-text-stroke:0.28px #000;left:170.10px;transform-origin:0 50%;transform:scaleX(0.985);">Marissa</span>
<span class="t" id="t98" style="font-size:8.5px;color:#000;top:236.03px;-webkit-text-stroke:0.28px #000;left:235.90px;transform-origin:0 50%;transform:scaleX(0.985);">Tran</span>
<span class="t" id="t99" style="font-size:8.5px;color:#000;top:236.03px;-webkit-text-stroke:0.28px #000;left:301.90px;transform-origin:0 50%;transform:scaleX(0.985);">Norota</span>
<span class="t" id="t100" style="font-size:8.5px;color:#000;top:236.03px;-webkit-text-stroke:0.28px #000;left:367.70px;transform-origin:0 50%;transform:scaleX(0.985);">Kim</span>
<span class="t" id="t101" style="font-size:8.5px;color:#000;top:236.03px;-webkit-text-stroke:0.28px #000;left:433.60px;transform-origin:0 50%;transform:scaleX(0.985);">total</span>
<span class="t" id="t102" style="font-size:8.5px;color:#000;top:336.43px;-webkit-text-stroke:0.28px #000;left:22.70px;transform-origin:0 50%;transform:scaleX(0.949);">No. (CM_EUROPE-)</span>
<span class="t" id="t103" style="font-size:8.5px;color:#000;top:336.43px;-webkit-text-stroke:0.28px #000;left:104.10px;transform-origin:0 50%;transform:scaleX(0.985);">Ito</span>
<span class="t" id="t104" style="font-size:8.5px;color:#000;top:336.43px;-webkit-text-stroke:0.28px #000;left:170.10px;transform-origin:0 50%;transform:scaleX(0.985);">Marissa</span>
<span class="t" id="t105" style="font-size:8.5px;color:#000;top:336.43px;-webkit-text-stroke:0.28px #000;left:235.90px;transform-origin:0 50%;transform:scaleX(0.985);">Tran</span>
<span class="t" id="t106" style="font-size:8.5px;color:#000;top:336.43px;-webkit-text-stroke:0.28px #000;left:301.90px;transform-origin:0 50%;transform:scaleX(0.985);">Norota</span>
<span class="t" id="t107" style="font-size:8.5px;color:#000;top:336.43px;-webkit-text-stroke:0.28px #000;left:367.70px;transform-origin:0 50%;transform:scaleX(0.985);">Kim</span>
<span class="t" id="t108" style="font-size:8.5px;color:#000;top:336.43px;-webkit-text-stroke:0.28px #000;left:433.60px;transform-origin:0 50%;transform:scaleX(0.985);">total</span>
<span class="t" id="t109" style="font-size:8.5px;color:#000;top:173.28px;-webkit-text-stroke:0.28px #000;right:539.50px;transform-origin:100% 50%;transform:scaleX(0.985);">536</span>
<span class="t" id="t110" style="font-size:8.5px;color:#000;top:173.28px;-webkit-text-stroke:0.28px #000;right:473.50px;transform-origin:100% 50%;transform:scaleX(0.985);">0,5</span>
<span class="t" id="t111" style="font-size:8.5px;color:#000;top:173.28px;-webkit-text-stroke:0.28px #000;right:407.70px;transform-origin:100% 50%;transform:scaleX(0.985);">0,5</span>
<span class="t" id="t112" style="font-size:8.5px;color:#000;top:173.28px;-webkit-text-stroke:0.28px #000;right:160.00px;transform-origin:100% 50%;transform:scaleX(0.985);">1</span>
<span class="t" id="t113" style="font-size:8.5px;color:#000;top:185.83px;-webkit-text-stroke:0.28px #000;right:539.50px;transform-origin:100% 50%;transform:scaleX(0.985);">569</span>
<span class="t" id="t114" style="font-size:8.5px;color:#000;top:185.83px;-webkit-text-stroke:0.28px #000;right:473.50px;transform-origin:100% 50%;transform:scaleX(0.985);">2,8</span>
<span class="t" id="t115" style="font-size:8.5px;color:#000;top:185.83px;-webkit-text-stroke:0.28px #000;right:407.70px;transform-origin:100% 50%;transform:scaleX(0.985);">5</span>
<span class="t" id="t116" style="font-size:8.5px;color:#000;top:185.83px;-webkit-text-stroke:0.28px #000;right:160.00px;transform-origin:100% 50%;transform:scaleX(0.985);">7,8</span>
<span class="t" id="t117" style="font-size:8.5px;color:#000;top:198.38px;-webkit-text-stroke:0.28px #000;left:22.70px;transform-origin:0 50%;transform:scaleX(0.985);">Total Hours</span>
<span class="t" id="t118" style="font-size:8.5px;color:#000;top:198.38px;-webkit-text-stroke:0.28px #000;right:473.50px;transform-origin:100% 50%;transform:scaleX(0.985);">3,3</span>
<span class="t" id="t119" style="font-size:8.5px;color:#000;top:198.38px;-webkit-text-stroke:0.28px #000;right:407.70px;transform-origin:100% 50%;transform:scaleX(0.985);">5,5</span>
<span class="t" id="t120" style="font-size:8.5px;color:#000;top:198.38px;-webkit-text-stroke:0.28px #000;right:341.70px;transform-origin:100% 50%;transform:scaleX(0.985);">0</span>
<span class="t" id="t121" style="font-size:8.5px;color:#000;top:198.38px;-webkit-text-stroke:0.28px #000;right:275.90px;transform-origin:100% 50%;transform:scaleX(0.985);">0</span>
<span class="t" id="t122" style="font-size:8.5px;color:#000;top:198.38px;-webkit-text-stroke:0.28px #000;right:210.00px;transform-origin:100% 50%;transform:scaleX(0.985);">0</span>
<span class="t" id="t123" style="font-size:8.5px;color:#000;top:198.38px;-webkit-text-stroke:0.28px #000;right:160.00px;transform-origin:100% 50%;transform:scaleX(0.985);">8,8</span>
<span class="t" id="t124" style="font-size:8.5px;color:#000;top:210.93px;-webkit-text-stroke:0.28px #000;left:22.70px;transform-origin:0 50%;transform:scaleX(0.985);">Payroll in Feb 2022</span>
<span class="t" id="t125" style="font-size:8.5px;color:#000;top:210.93px;-webkit-text-stroke:0.28px #000;right:473.50px;transform-origin:100% 50%;transform:scaleX(0.985);">99,00 €</span>
<span class="t" id="t126" style="font-size:8.5px;color:#000;top:210.93px;-webkit-text-stroke:0.28px #000;right:407.70px;transform-origin:100% 50%;transform:scaleX(0.985);">165,00 €</span>
<span class="t" id="t127" style="font-size:8.5px;color:#000;top:210.93px;-webkit-text-stroke:0.28px #000;right:341.70px;transform-origin:100% 50%;transform:scaleX(0.985);">0,00 €</span>
<span class="t" id="t128" style="font-size:8.5px;color:#000;top:210.93px;-webkit-text-stroke:0.28px #000;right:275.90px;transform-origin:100% 50%;transform:scaleX(0.985);">0,00 €</span>
<span class="t" id="t129" style="font-size:8.5px;color:#000;top:210.93px;-webkit-text-stroke:0.28px #000;right:210.00px;transform-origin:100% 50%;transform:scaleX(0.985);">0,00 €</span>
<span class="t" id="t130" style="font-size:8.5px;color:#000;top:210.93px;-webkit-text-stroke:0.28px #000;right:160.00px;transform-origin:100% 50%;transform:scaleX(0.985);">264,00 €</span>
<span class="t" id="t131" style="font-size:8.5px;color:#000;top:248.58px;-webkit-text-stroke:0.28px #000;right:539.50px;transform-origin:100% 50%;transform:scaleX(0.985);">529</span>
<span class="t" id="t132" style="font-size:8.5px;color:#000;top:248.58px;-webkit-text-stroke:0.28px #000;right:473.50px;transform-origin:100% 50%;transform:scaleX(0.985);">9,5</span>
<span class="t" id="t133" style="font-size:8.5px;color:#000;top:248.58px;-webkit-text-stroke:0.28px #000;right:407.70px;transform-origin:100% 50%;transform:scaleX(0.985);">0</span>
<span class="t" id="t134" style="font-size:8.5px;color:#000;top:248.58px;-webkit-text-stroke:0.28px #000;right:341.70px;transform-origin:100% 50%;transform:scaleX(0.985);">0</span>
<span class="t" id="t135" style="font-size:8.5px;color:#000;top:248.58px;-webkit-text-stroke:0.28px #000;right:275.90px;transform-origin:100% 50%;transform:scaleX(0.985);">3,5</span>
<span class="t" id="t136" style="font-size:8.5px;color:#000;top:248.58px;-webkit-text-stroke:0.28px #000;right:210.00px;transform-origin:100% 50%;transform:scaleX(0.985);">6</span>
<span class="t" id="t137" style="font-size:8.5px;color:#000;top:248.58px;-webkit-text-stroke:0.28px #000;right:160.00px;transform-origin:100% 50%;transform:scaleX(0.985);">19</span>
<span class="t" id="t138" style="font-size:8.5px;color:#000;top:261.12px;-webkit-text-stroke:0.28px #000;right:539.50px;transform-origin:100% 50%;transform:scaleX(0.985);">536</span>
<span class="t" id="t139" style="font-size:8.5px;color:#000;top:261.12px;-webkit-text-stroke:0.28px #000;right:473.50px;transform-origin:100% 50%;transform:scaleX(0.985);">0,5</span>
<span class="t" id="t140" style="font-size:8.5px;color:#000;top:261.12px;-webkit-text-stroke:0.28px #000;right:407.70px;transform-origin:100% 50%;transform:scaleX(0.985);">0,5</span>
<span class="t" id="t141" style="font-size:8.5px;color:#000;top:261.12px;-webkit-text-stroke:0.28px #000;right:160.00px;transform-origin:100% 50%;transform:scaleX(0.985);">1</span>
<span class="t" id="t142" style="font-size:8.5px;color:#000;top:273.68px;-webkit-text-stroke:0.28px #000;right:539.50px;transform-origin:100% 50%;transform:scaleX(0.985);">566</span>
<span class="t" id="t143" style="font-size:8.5px;color:#000;top:273.68px;-webkit-text-stroke:0.28px #000;right:407.70px;transform-origin:100% 50%;transform:scaleX(0.985);">2,5</span>
<span class="t" id="t144" style="font-size:8.5px;color:#000;top:273.68px;-webkit-text-stroke:0.28px #000;right:275.90px;transform-origin:100% 50%;transform:scaleX(0.985);">5</span>
<span class="t" id="t145" style="font-size:8.5px;color:#000;top:273.68px;-webkit-text-stroke:0.28px #000;right:160.00px;transform-origin:100% 50%;transform:scaleX(0.985);">7,5</span>
<span class="t" id="t146" style="font-size:8.5px;color:#000;top:286.23px;-webkit-text-stroke:0.28px #000;right:539.50px;transform-origin:100% 50%;transform:scaleX(0.985);">569</span>
<span class="t" id="t147" style="font-size:8.5px;color:#000;top:286.23px;-webkit-text-stroke:0.28px #000;right:473.50px;transform-origin:100% 50%;transform:scaleX(0.985);">2,8</span>
<span class="t" id="t148" style="font-size:8.5px;color:#000;top:286.23px;-webkit-text-stroke:0.28px #000;right:407.70px;transform-origin:100% 50%;transform:scaleX(0.985);">5</span>
<span class="t" id="t149" style="font-size:8.5px;color:#000;top:286.23px;-webkit-text-stroke:0.28px #000;right:160.00px;transform-origin:100% 50%;transform:scaleX(0.985);">7,8</span>
<span class="t" id="t150" style="font-size:8.5px;color:#000;top:298.78px;-webkit-text-stroke:0.28px #000;left:22.70px;transform-origin:0 50%;transform:scaleX(0.985);">Total Hours</span>
<span class="t" id="t151" style="font-size:8.5px;color:#000;top:298.78px;-webkit-text-stroke:0.28px #000;right:473.50px;transform-origin:100% 50%;transform:scaleX(0.985);">12,8</span>
<span class="t" id="t152" style="font-size:8.5px;color:#000;top:298.78px;-webkit-text-stroke:0.28px #000;right:407.70px;transform-origin:100% 50%;transform:scaleX(0.985);">8</span>
<span class="t" id="t153" style="font-size:8.5px;color:#000;top:298.78px;-webkit-text-stroke:0.28px #000;right:341.70px;transform-origin:100% 50%;transform:scaleX(0.985);">0</span>
<span class="t" id="t154" style="font-size:8.5px;color:#000;top:298.78px;-webkit-text-stroke:0.28px #000;right:275.90px;transform-origin:100% 50%;transform:scaleX(0.985);">8,5</span>
<span class="t" id="t155" style="font-size:8.5px;color:#000;top:298.78px;-webkit-text-stroke:0.28px #000;right:210.00px;transform-origin:100% 50%;transform:scaleX(0.985);">6</span>
<span class="t" id="t156" style="font-size:8.5px;color:#000;top:298.78px;-webkit-text-stroke:0.28px #000;right:160.00px;transform-origin:100% 50%;transform:scaleX(0.985);">35,3</span>
<span class="t" id="t157" style="font-size:8.5px;color:#000;top:311.32px;-webkit-text-stroke:0.28px #000;left:22.70px;transform-origin:0 50%;transform:scaleX(0.985);">Payroll in Aug 2022</span>
<span class="t" id="t158" style="font-size:8.5px;color:#000;top:311.32px;-webkit-text-stroke:0.28px #000;right:473.50px;transform-origin:100% 50%;transform:scaleX(0.985);">384,00 €</span>
<span class="t" id="t159" style="font-size:8.5px;color:#000;top:311.32px;-webkit-text-stroke:0.28px #000;right:407.70px;transform-origin:100% 50%;transform:scaleX(0.985);">240,00 €</span>
<span class="t" id="t160" style="font-size:8.5px;color:#000;top:311.32px;-webkit-text-stroke:0.28px #000;right:341.70px;transform-origin:100% 50%;transform:scaleX(0.985);">0,00 €</span>
<span class="t" id="t161" style="font-size:8.5px;color:#000;top:311.32px;-webkit-text-stroke:0.28px #000;right:275.90px;transform-origin:100% 50%;transform:scaleX(0.985);">255,00 €</span>
<span class="t" id="t162" style="font-size:8.5px;color:#000;top:311.32px;-webkit-text-stroke:0.28px #000;right:210.00px;transform-origin:100% 50%;transform:scaleX(0.985);">180,00 €</span>
<span class="t" id="t163" style="font-size:8.5px;color:#000;top:311.32px;-webkit-text-stroke:0.28px #000;right:160.00px;transform-origin:100% 50%;transform:scaleX(0.985);">1.059,00 €</span>
<span class="t" id="t164" style="font-size:8.5px;color:#000;top:348.98px;-webkit-text-stroke:0.28px #000;right:539.50px;transform-origin:100% 50%;transform:scaleX(0.985);">570</span>
<span class="t" id="t165" style="font-size:8.5px;color:#000;top:348.98px;-webkit-text-stroke:0.28px #000;right:407.70px;transform-origin:100% 50%;transform:scaleX(0.985);">2,3</span>
<span class="t" id="t166" style="font-size:8.5px;color:#000;top:348.98px;-webkit-text-stroke:0.28px #000;right:275.90px;transform-origin:100% 50%;transform:scaleX(0.985);">2</span>
<span class="t" id="t167" style="font-size:8.5px;color:#000;top:348.98px;-webkit-text-stroke:0.28px #000;right:160.00px;transform-origin:100% 50%;transform:scaleX(0.985);">4,25</span>
<span class="t" id="t168" style="font-size:8.5px;color:#000;top:361.53px;-webkit-text-stroke:0.28px #000;right:539.50px;transform-origin:100% 50%;transform:scaleX(0.985);">571</span>
<span class="t" id="t169" style="font-size:8.5px;color:#000;top:361.53px;-webkit-text-stroke:0.28px #000;right:407.70px;transform-origin:100% 50%;transform:scaleX(0.985);">1,25</span>
<span class="t" id="t170" style="font-size:8.5px;color:#000;top:361.53px;-webkit-text-stroke:0.28px #000;right:275.90px;transform-origin:100% 50%;transform:scaleX(0.985);">2</span>
<span class="t" id="t171" style="font-size:8.5px;color:#000;top:361.53px;-webkit-text-stroke:0.28px #000;right:160.00px;transform-origin:100% 50%;transform:scaleX(0.985);">3,25</span>
<span class="t" id="t172" style="font-size:8.5px;color:#000;top:374.07px;-webkit-text-stroke:0.28px #000;right:539.50px;transform-origin:100% 50%;transform:scaleX(0.985);">572</span>
<span class="t" id="t173" style="font-size:8.5px;color:#000;top:374.07px;-webkit-text-stroke:0.28px #000;right:473.50px;transform-origin:100% 50%;transform:scaleX(0.985);">0,2</span>
<span class="t" id="t174" style="font-size:8.5px;color:#000;top:374.07px;-webkit-text-stroke:0.28px #000;right:407.70px;transform-origin:100% 50%;transform:scaleX(0.985);">2,5</span>
<span class="t" id="t175" style="font-size:8.5px;color:#000;top:374.07px;-webkit-text-stroke:0.28px #000;right:275.90px;transform-origin:100% 50%;transform:scaleX(0.985);">2,5</span>
<span class="t" id="t176" style="font-size:8.5px;color:#000;top:374.07px;-webkit-text-stroke:0.28px #000;right:160.00px;transform-origin:100% 50%;transform:scaleX(0.985);">5,2</span>
<span class="t" id="t177" style="font-size:8.5px;color:#000;top:386.62px;-webkit-text-stroke:0.28px #000;right:539.50px;transform-origin:100% 50%;transform:scaleX(0.985);">574</span>
<span class="t" id="t178" style="font-size:8.5px;color:#000;top:386.62px;-webkit-text-stroke:0.28px #000;right:473.50px;transform-origin:100% 50%;transform:scaleX(0.985);">1,9</span>
<span class="t" id="t179" style="font-size:8.5px;color:#000;top:386.62px;-webkit-text-stroke:0.28px #000;right:407.70px;transform-origin:100% 50%;transform:scaleX(0.985);">1,5</span>
<span class="t" id="t180" style="font-size:8.5px;color:#000;top:386.62px;-webkit-text-stroke:0.28px #000;right:160.00px;transform-origin:100% 50%;transform:scaleX(0.985);">3,4</span>
<span class="t" id="t181" style="font-size:8.5px;color:#000;top:399.18px;-webkit-text-stroke:0.28px #000;right:539.50px;transform-origin:100% 50%;transform:scaleX(0.985);">577</span>
<span class="t" id="t182" style="font-size:8.5px;color:#000;top:399.18px;-webkit-text-stroke:0.28px #000;right:160.00px;transform-origin:100% 50%;transform:scaleX(0.985);">0</span>
<span class="t" id="t183" style="font-size:9.6px;color:#000;top:135.00px;font-family:'DejaVu Sans', sans-serif;-webkit-text-stroke:0.2px #000;left:235.90px;transform-origin:0 50%;transform:scaleX(0.932);">←</span>
<span class="t" id="t184" style="font-size:9.4px;color:#000;top:135.30px;-webkit-text-stroke:0.22px #000;left:246.40px;transform-origin:0 50%;transform:scaleX(0.939);">Click to finalize the current open table.</span>
<span class="t" id="t185" style="font-size:7.2px;color:#7f7f7f;top:148.80px;left:235.60px;transform-origin:0 50%;transform:scaleX(1.026);">!! Please don't edit the table format. Any change may affect the script.</span>
<span class="t" id="t186" style="font-size:7.6px;color:#fff;top:138.20px;left:37.50px;transform-origin:0 50%;transform:scaleX(1.042);">Calculate Total Hours and Commissions</span>
</div>
<svg width="640" height="466" viewBox="0 0 640 466">
<rect x="0" y="446" width="640" height="20" fill="#f3f2f1"/>
<path d="M9.2,451.8 L6.6,454.7 L9.2,457.6" fill="none" stroke="#c4c2c0" stroke-width="0.8"/>
<path d="M26.2,451.8 L28.8,454.7 L26.2,457.6" fill="none" stroke="#c4c2c0" stroke-width="0.8"/>
<path d="M43.2,452.4 L50.2,452.4 M43.2,454.8 L50.2,454.8 M43.2,457.2 L50.2,457.2" stroke="#484644" stroke-width="0.8"/>
<rect x="61.8" y="462.7" width="18" height="1.9" rx="0.9" fill="#107c41"/>
<path d="M120.4,454.7 L126.8,454.7 M123.6,451.5 L123.6,457.9" stroke="#484644" stroke-width="0.85"/>
<rect x="17.1" y="410.8" width="467.9" height="29" rx="0.8" fill="none" stroke="#ffffff" stroke-width="2.6" opacity="0.55"/>
<rect x="17.1" y="410.8" width="467.9" height="29" rx="0.8" fill="none" stroke="#ec2f66" stroke-width="1.5"/>
<path d="M487.2,417.6 L495,408.4 L496.2,413 L511.4,407.6 L511.7,408.4 L497.2,415.6 L498.5,419.2 Z" fill="#ee3168" stroke="#ee3168" stroke-width="0.5" stroke-linejoin="round"/>
</svg>
<div class="L">
<span class="t" id="t86" style="font-size:8.2px;color:#252423;top:447.60px;left:61.90px;transform-origin:0 50%;transform:scaleX(0.977);">2022</span>
<span class="t" id="t87" style="font-size:8.2px;color:#323130;top:447.60px;left:91.00px;transform-origin:0 50%;transform:scaleX(0.955);">2021</span>
</div>
</body></html>
